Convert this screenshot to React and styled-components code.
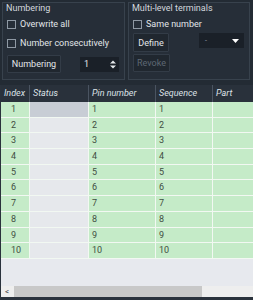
import React from "react";
import styled, { createGlobalStyle } from "styled-components";

const Global = createGlobalStyle`
  html, body { margin: 0; padding: 0; background: #252d37; }
  body { font-family: Roboto, "Noto Sans", sans-serif; }
`;

const Page = styled.div`
  width: 253px;
  height: 300px;
  display: flex;
  flex-direction: column;
  background: #252d37;
  overflow: hidden;
`;

const Panel = styled.div`
  height: 85px;
  box-sizing: border-box;
  display: flex;
  gap: 3px;
  padding: 2px 3px 5px 2px;
  background: #232b34;
`;

const Group = styled.div`
  flex: ${(p) => p.$w}px 0 0;
  width: ${(p) => p.$w}px;
  box-sizing: border-box;
  border: 1px solid #38424d;
  background: #262e38;
  padding: 0 4px;
  display: flex;
  flex-direction: column;
`;

const Title = styled.div`
  font-size: 9px;
  line-height: 11px;
  color: #d3d8de;
  margin-left: -1px;
`;

const CheckRow = styled.label`
  display: flex;
  align-items: center;
  gap: 4px;
  height: 14px;
  margin-top: ${(p) => p.$mt}px;
  font-size: 9px;
  color: #e1e5e9;
`;

const Box = styled.span`
  width: 9px;
  height: 9px;
  border: 1px solid #8f99a4;
  box-sizing: border-box;
  display: inline-block;
`;

const Row = styled.div`
  display: flex;
  align-items: ${(p) => p.$align || "center"};
  margin-top: ${(p) => p.$mt}px;
  gap: ${(p) => p.$gap || 0}px;
`;

const Button = styled.div`
  box-sizing: border-box;
  width: ${(p) => p.$w}px;
  height: ${(p) => p.$h}px;
  display: flex;
  align-items: center;
  justify-content: center;
  font-size: 9px;
  color: ${(p) => (p.$disabled ? "#5e6873" : "#e3e6ea")};
  background: #20272f;
  border: 1px solid #333c47;
  border-radius: 1px;
`;

const Spin = styled.div`
  box-sizing: border-box;
  width: 39px;
  height: 15px;
  background: #1a2028;
  display: flex;
  align-items: center;
  justify-content: space-between;
  padding: 0 3px 0 4px;
  font-size: 9px;
  color: #e3e6ea;
`;

const Select = styled.div`
  box-sizing: border-box;
  width: 45px;
  height: 15px;
  background: #1a2028;
  display: flex;
  align-items: center;
  justify-content: space-between;
  padding: 0 5px 0 6px;
  font-size: 7px;
  color: #9aa3ad;
`;

const Table = styled.div`
  flex: 1;
  display: flex;
  flex-direction: column;
  background: #e7e9ee;
  border-left: 1px solid #2a323c;
  border-bottom: 3px solid #2a323c;
`;

const Header = styled.div`
  display: grid;
  grid-template-columns: 29px 59px 67px 57px 1fr;
  height: 17px;
  background: #29313b;
  margin-left: -1px;
`;

const HCell = styled.div`
  font-size: 9px;
  font-style: italic;
  color: #dde2e7;
  line-height: 17px;
  padding-left: 3px;
  border-left: 1px solid ${(p) => (p.$first ? "#2a323c" : "#4a5461")};
  white-space: nowrap;
  overflow: hidden;
`;

const BodyRow = styled.div`
  display: grid;
  grid-template-columns: 28px 59px 67px 57px 1fr;
  height: 15.7px;
  flex: 0 0 15.7px;
  box-sizing: border-box;
  border-bottom: 1px solid #f2f8f2;
`;

const Cell = styled.div`
  font-size: 9px;
  line-height: 14.7px;
  color: #3f4d42;
  padding-left: ${(p) => p.$pl || 3}px;
  background: ${(p) => p.$bg || "#c5ebc8"};
  border-left: ${(p) => (p.$noBorder ? "none" : "1px solid #f2f8f2")};
`;

const Empty = styled.div`
  flex: 1;
`;

const Scrollbar = styled.div`
  height: 11px;
  flex: 0 0 11px;
  display: flex;
  align-items: center;
  background: #eeeeee;
`;

const Arrow = styled.div`
  width: 13px;
  font-size: 8px;
  color: #444;
  padding-left: 4px;
  box-sizing: border-box;
  line-height: 11px;
`;

const Thumb = styled.div`
  width: 188px;
  height: 11px;
  background: #c8c8c8;
`;

export default function App() {
  const rows = Array.from({ length: 10 }, (_, i) => i + 1);
  return (
    <>
      <Global />
      <Page>
        <Panel>
          <Group $w={123}>
            <Title>Numbering</Title>
            <CheckRow $mt={3}>
              <Box />
              Overwrite all
            </CheckRow>
            <CheckRow $mt={5}>
              <Box />
              Number consecutively
            </CheckRow>
            <Row $mt={5} $gap={19}>
              <Button $w={54} $h={18}>Numbering</Button>
              <Spin>
                <span>1</span>
                <svg width="6" height="9" viewBox="0 0 6 9">
                  <path d="M0 3.5 L3 0.5 L6 3.5 Z M0 5.5 L3 8.5 L6 5.5 Z" fill="#e6e9ec" />
                </svg>
              </Spin>
            </Row>
          </Group>
          <Group $w={122}>
            <Title>Multi-level terminals</Title>
            <CheckRow $mt={3}>
              <Box />
              Same number
            </CheckRow>
            <Row $mt={2} $gap={30} $align="flex-start">
              <Button $w={36} $h={19}>Define</Button>
              <Select>
                <span>-</span>
                <svg width="7" height="4" viewBox="0 0 7 4">
                  <path d="M0 0 L7 0 L3.5 4 Z" fill="#ffffff" />
                </svg>
              </Select>
            </Row>
            <Row $mt={2}>
              <Button $w={37} $h={18} $disabled>Revoke</Button>
            </Row>
          </Group>
        </Panel>
        <Table>
          <Header>
            <HCell $first>Index</HCell>
            <HCell>Status</HCell>
            <HCell>Pin number</HCell>
            <HCell>Sequence</HCell>
            <HCell>Part</HCell>
          </Header>
          {rows.map((n) => (
            <BodyRow key={n}>
              <Cell $pl={10} $noBorder>{n}</Cell>
              <Cell $bg={n === 1 ? "#c8cdd5" : "#e6e8ec"} />
              <Cell>{n}</Cell>
              <Cell>{n}</Cell>
              <Cell />
            </BodyRow>
          ))}
          <Empty />
          <Scrollbar>
            <Arrow>&lt;</Arrow>
            <Thumb />
          </Scrollbar>
        </Table>
      </Page>
    </>
  );
}
